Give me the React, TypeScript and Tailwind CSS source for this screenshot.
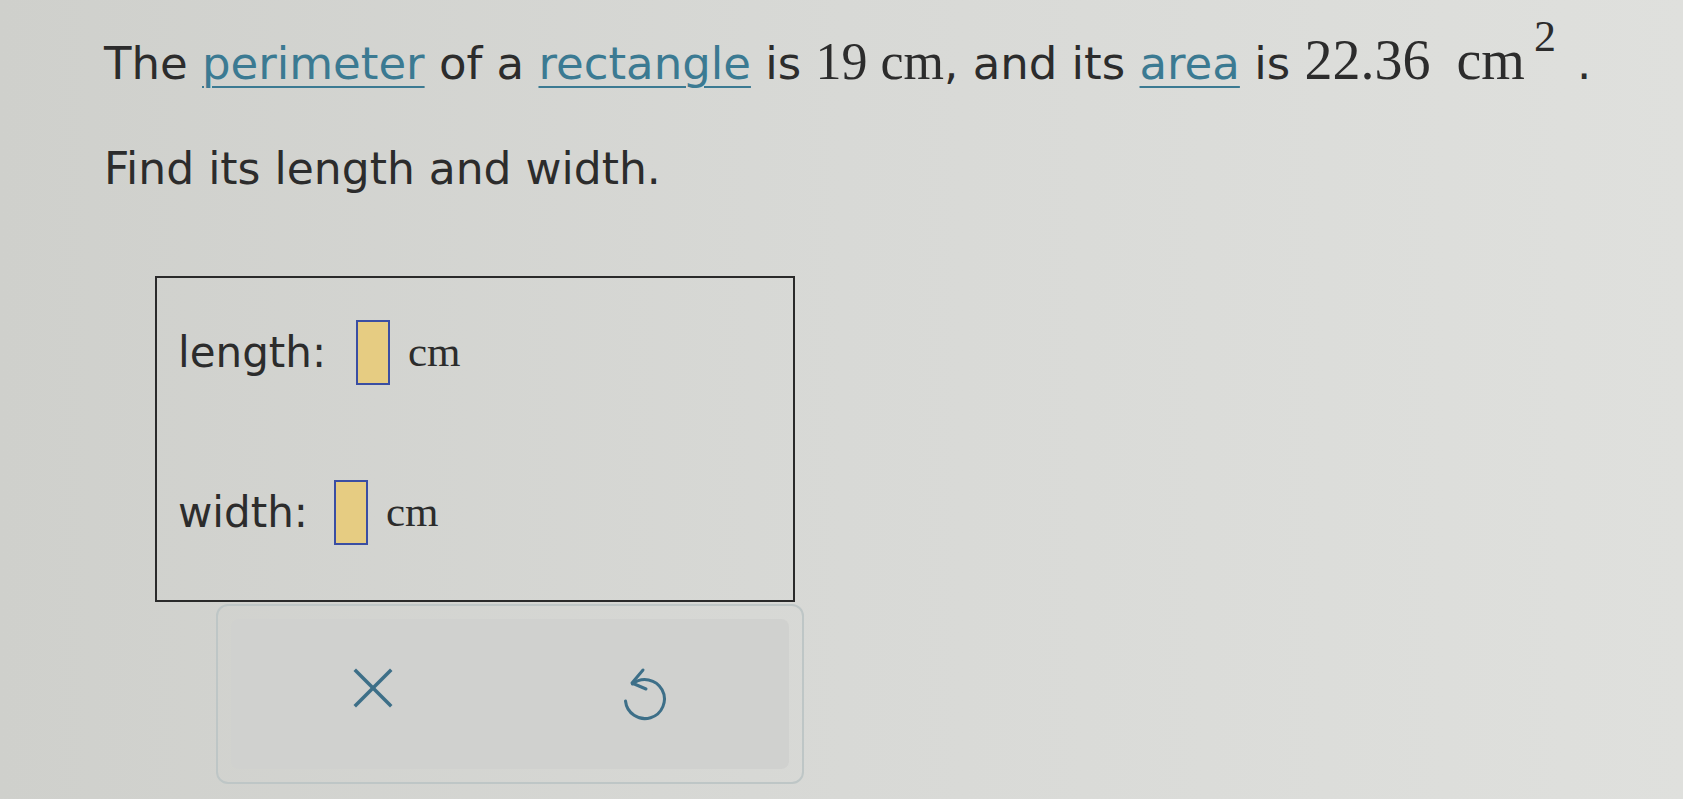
import React from "react";

function Link({ children }: { children: React.ReactNode }) {
  return (
    <span className="text-[#3b7a92] underline decoration-[#3b7a92] decoration-2 underline-offset-[7px]">
      {children}
    </span>
  );
}

function AnswerInput() {
  return <span className="inline-block w-[34px] h-[65px] bg-[#e6cc82] border-2 border-[#3a4ea3]" />;
}

function UndoIcon() {
  return (
    <svg width="43" height="56" viewBox="0 0 43 56" fill="none" stroke="#3d6f88" strokeWidth="3" strokeLinecap="round" strokeLinejoin="round">
      <path d="M2.5 36 A19.5 19.5 0 1 0 9.5 19" />
      <path d="M20 5 L9 18 L23 24" />
    </svg>
  );
}

function CloseIcon() {
  return (
    <svg width="40" height="40" viewBox="0 0 40 40" fill="none" stroke="#3d6f88" strokeWidth="3.5" strokeLinecap="square">
      <path d="M3 3 L37 37" />
      <path d="M37 3 L3 37" />
    </svg>
  );
}

export default function App() {
  return (
    <div className="min-h-[799px] w-full bg-gradient-to-r from-[#cfd0cc] via-[#d8d9d6] to-[#dfe0dd] font-['DejaVu_Sans',sans-serif] text-[#2c2c2c] pl-[104px] pt-[30px]">
      <p className="text-[45px] leading-[60px] whitespace-nowrap">
        The <Link>perimeter</Link> of a <Link>rectangle</Link> is{" "}
        <span className="font-['Liberation_Serif',serif] text-[52px]">19 cm</span>, and its{" "}
        <Link>area</Link> is{" "}
        <span className="font-['Liberation_Serif',serif] text-[56px]">
          22.36<span className="ml-[26px]">cm</span>
        </span>
        <span className="relative -top-[28px] ml-[9px] font-['Liberation_Serif',serif] text-[44px]">2</span>
        <span className="ml-[21px]">.</span>
      </p>
      <p className="mt-[44px] text-[44px] leading-[60px]">Find its length and width.</p>

      <div className="mt-[77px] ml-[51px] w-[640px] border-2 border-[#2a2a2a] pl-[21px] pt-[42px] pb-[55px] text-[42px]">
        <div className="flex items-center h-[65px]">
          <span>length:</span>
          <span className="ml-[30px] flex"><AnswerInput /></span>
          <span className="ml-[18px] font-['Liberation_Serif',serif] text-[43px]">cm</span>
        </div>
        <div className="flex items-center h-[65px] mt-[95px]">
          <span>width:</span>
          <span className="ml-[26px] flex"><AnswerInput /></span>
          <span className="ml-[18px] font-['Liberation_Serif',serif] text-[43px]">cm</span>
        </div>
      </div>

      <div className="mt-[2px] ml-[112px] w-[588px] h-[180px] rounded-[12px] border-2 border-[#bec6c6] p-[13px]">
        <div className="h-full rounded-[8px] bg-[#d0d1cf] flex items-center">
          <div className="w-[280px] flex justify-center">
            <span className="ml-[4px] -mt-[12px]"><CloseIcon /></span>
          </div>
          <div className="w-[280px] flex justify-center">
            <span className="-ml-[10px] -mt-[2px]"><UndoIcon /></span>
          </div>
        </div>
      </div>
    </div>
  );
}
